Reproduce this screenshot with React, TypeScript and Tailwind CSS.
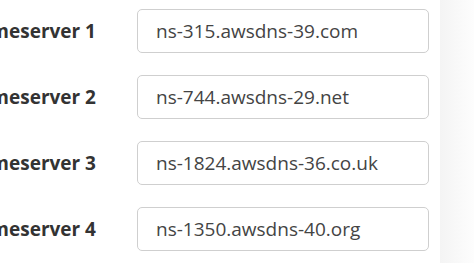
export default function App() {
  const rows = [
    { label: 'Nameserver 1', value: 'ns-315.awsdns-39.com' },
    { label: 'Nameserver 2', value: 'ns-744.awsdns-29.net' },
    { label: 'Nameserver 3', value: 'ns-1824.awsdns-36.co.uk' },
    { label: 'Nameserver 4', value: 'ns-1350.awsdns-40.org' },
  ];

  return (
    <div
      className="flex w-[474px] h-[267px] bg-white overflow-hidden"
      style={{ fontFamily: '"Open Sans", "Noto Sans", sans-serif' }}
    >
      <div className="w-[440px] shrink-0 flex flex-col gap-[22px] pt-[9px]">
        {rows.map((r) => (
          <div key={r.label} className="flex items-center h-[44px]">
            <div className="w-[96px] shrink-0 flex justify-end">
              <span className="whitespace-nowrap text-[19px] font-bold text-[#333333]">{r.label}</span>
            </div>
            <div className="ml-[41px] w-[292px] h-[44px] flex items-center pl-[18px] border-[1.5px] border-[#cfcfcf] rounded-[5px] bg-white">
              <span className="text-[19px] text-[#444444] whitespace-nowrap">{r.value}</span>
            </div>
          </div>
        ))}
      </div>
      <div className="flex-1 h-[263px] bg-gradient-to-r from-[#f4f4f4] to-[#fdfdfd]" />
    </div>
  );
}
